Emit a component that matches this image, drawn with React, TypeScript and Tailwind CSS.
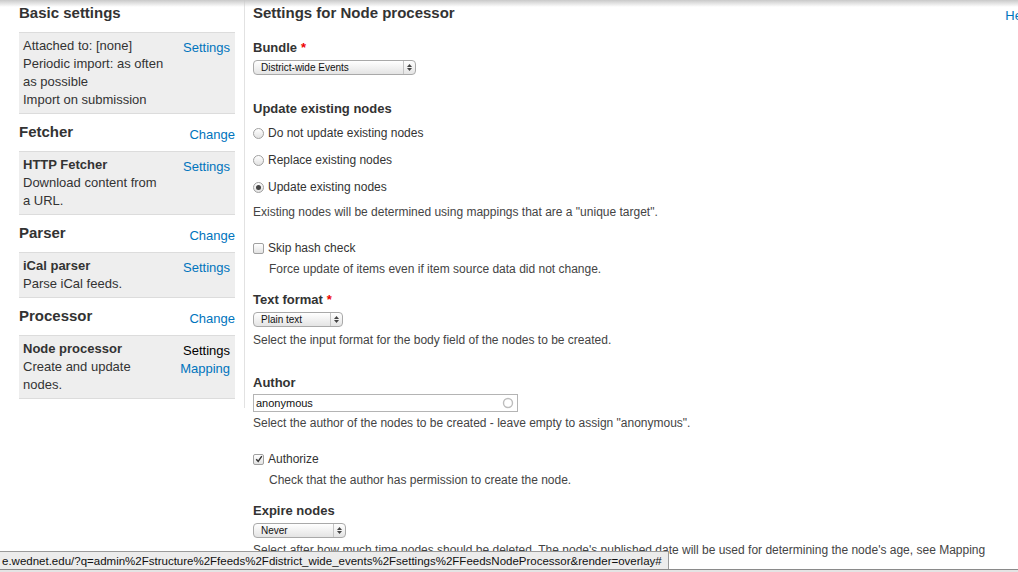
import React from 'react'

const font = { fontFamily: '"Liberation Sans", Arial, sans-serif' }

interface PluginBoxProps {
  title?: string
  lines: string[]
  links: { label: string; active?: boolean }[]
}

const PluginBox: React.FC<PluginBoxProps> = ({ title, lines, links }) => (
  <div className="flex justify-between border-y border-[#dcdcdc] bg-[#eeeeee] pl-[4px] pr-[5px] pt-[4px] pb-[4px] text-[13px] leading-[18px] text-[#333]">
    <div className="w-[142px]">
      {title && <div className="font-bold">{title}</div>}
      {lines.map((l) => (
        <div key={l}>{l}</div>
      ))}
    </div>
    <div className="flex flex-col items-end pt-[2px]">
      {links.map((l) => (
        <span
          key={l.label}
          className={l.active ? 'text-[#000]' : 'text-[#0074bd]'}
        >
          {l.label}
        </span>
      ))}
    </div>
  </div>
)

const SectionHead: React.FC<{ title: string; change?: boolean; first?: boolean }> = ({
  title,
  change,
  first,
}) => (
  <div
    className={`flex items-start justify-between ${
      first ? 'h-[32px] pt-[4px]' : 'h-[37px] pt-[9px]'
    }`}
  >
    <h3 className="text-[15px] font-bold leading-[18px] text-[#333]">{title}</h3>
    {change && (
      <span className="relative top-[3px] text-[13px] leading-[18px] text-[#0074bd]">
        Change
      </span>
    )}
  </div>
)

const Select: React.FC<{ value: string; width: string }> = ({ value, width }) => (
  <div
    className={`flex h-[15px] ${width} items-center justify-between rounded-[4px] border border-[#a9a9a9] bg-gradient-to-b from-[#ffffff] to-[#e4e4e4] text-[10px] leading-[13px] text-[#111]`}
  >
    <span className="pl-[7px]">{value}</span>
    <span className="flex h-full w-[12px] flex-col items-center justify-center gap-[1px] border-l border-[#c4c4c4]">
      <svg width="5" height="3" viewBox="0 0 5 3">
        <path d="M0 3 L2.5 0 L5 3 Z" fill="#444" />
      </svg>
      <svg width="5" height="3" viewBox="0 0 5 3">
        <path d="M0 0 L2.5 3 L5 0 Z" fill="#444" />
      </svg>
    </span>
  </div>
)

const Radio: React.FC<{ label: string; checked?: boolean; className?: string }> = ({
  label,
  checked,
  className,
}) => (
  <div className={`flex items-center text-[12px] leading-[18px] text-[#333] ${className ?? ''}`}>
    <span className="flex h-[11px] w-[11px] items-center justify-center rounded-full border border-[#a0a0a0] bg-gradient-to-b from-[#ffffff] to-[#e2e2e2]">
      {checked && <span className="h-[5px] w-[5px] rounded-full bg-[#444]" />}
    </span>
    <span className="ml-[4px]">{label}</span>
  </div>
)

const Checkbox: React.FC<{ label: string; checked?: boolean; className?: string }> = ({
  label,
  checked,
  className,
}) => (
  <div className={`flex items-center text-[12px] leading-[18px] text-[#333] ${className ?? ''}`}>
    <span className="flex h-[11px] w-[11px] items-center justify-center rounded-[2px] border border-[#a0a0a0] bg-gradient-to-b from-[#ffffff] to-[#e2e2e2]">
      {checked && (
        <svg width="8" height="8" viewBox="0 0 8 8">
          <path d="M1.2 4.2 L3.2 6.3 L6.8 1.2" stroke="#333" strokeWidth="1.4" fill="none" />
        </svg>
      )}
    </span>
    <span className="ml-[4px]">{label}</span>
  </div>
)

const Label: React.FC<{ text: string; required?: boolean; className?: string }> = ({
  text,
  required,
  className,
}) => (
  <div className={`text-[13px] font-bold leading-[18px] text-[#333] ${className ?? ''}`}>
    {text}
    {required && <span className="ml-[4px] text-[#e00]">*</span>}
  </div>
)

const Desc: React.FC<{ children: React.ReactNode; className?: string }> = ({
  children,
  className,
}) => (
  <div className={`text-[12px] leading-[18px] text-[#444] ${className ?? ''}`}>{children}</div>
)

export default function App() {
  return (
    <div className="relative h-[572px] w-[1018px] overflow-hidden bg-white" style={font}>
      {/* top shadow */}
      <div className="pointer-events-none absolute left-0 top-0 z-10 h-[7px] w-full bg-gradient-to-b from-[#c9c9c9] to-transparent" />

      <div className="flex items-start">
        {/* Sidebar */}
        <aside className="w-[245px] shrink-0 border-r border-[#e2e2e2] pb-[9px] pl-[19px] pr-[9px]">
          <SectionHead title="Basic settings" first />
          <PluginBox
            lines={[
              'Attached to: [none]',
              'Periodic import: as often as possible',
              'Import on submission',
            ]}
            links={[{ label: 'Settings' }]}
          />
          <SectionHead title="Fetcher" change />
          <PluginBox
            title="HTTP Fetcher"
            lines={['Download content from a URL.']}
            links={[{ label: 'Settings' }]}
          />
          <SectionHead title="Parser" change />
          <PluginBox
            title="iCal parser"
            lines={['Parse iCal feeds.']}
            links={[{ label: 'Settings' }]}
          />
          <SectionHead title="Processor" change />
          <PluginBox
            title="Node processor"
            lines={['Create and update nodes.']}
            links={[{ label: 'Settings', active: true }, { label: 'Mapping' }]}
          />
        </aside>

        {/* Main form */}
        <main className="min-w-0 flex-1 pl-[8px] pt-[5px]">
          <div className="-mt-[1px] flex h-[18px] items-start">
            <h2 className="text-[15px] font-bold leading-[18px] text-[#333]">
              Settings for Node processor
            </h2>
            <span className="relative top-[3px] ml-auto mr-[-14px] text-[13px] leading-[18px] text-[#0074bd]">
              Help
            </span>
          </div>

          <Label text="Bundle" required className="mt-[17px]" />
          <div className="mt-[3px]">
            <Select value="District-wide Events" width="w-[163px]" />
          </div>

          <Label text="Update existing nodes" className="mt-[25px]" />
          <Radio label="Do not update existing nodes" className="mt-[6px]" />
          <Radio label="Replace existing nodes" className="mt-[9px]" />
          <Radio label="Update existing nodes" checked className="mt-[9px]" />
          <Desc className="mt-[7px]">
            Existing nodes will be determined using mappings that are a "unique target".
          </Desc>

          <Checkbox label="Skip hash check" className="mt-[18px]" />
          <Desc className="mt-[3px] pl-[16px]">
            Force update of items even if item source data did not change.
          </Desc>

          <Label text="Text format" required className="mt-[13px]" />
          <div className="mt-[3px]">
            <Select value="Plain text" width="w-[90px]" />
          </div>
          <Desc className="mt-[4px]">
            Select the input format for the body field of the nodes to be created.
          </Desc>

          <Label text="Author" className="mt-[25px]" />
          <div className="mt-[2px] flex h-[18px] w-[265px] items-center justify-between border border-[#b4b4b4] pl-[2px] pr-[3px] text-[11px] text-[#111]">
            <span>anonymous</span>
            <svg width="12" height="12" viewBox="0 0 12 12">
              <circle cx="6" cy="6" r="4.5" stroke="#bdbdbd" strokeWidth="1.4" fill="none" />
            </svg>
          </div>
          <Desc className="mt-[2px]">
            Select the author of the nodes to be created - leave empty to assign "anonymous".
          </Desc>

          <Checkbox label="Authorize" checked className="mt-[18px]" />
          <Desc className="mt-[3px] pl-[16px]">
            Check that the author has permission to create the node.
          </Desc>

          <Label text="Expire nodes" className="mt-[13px]" />
          <div className="mt-[3px]">
            <Select value="Never" width="w-[93px]" />
          </div>
          <Desc className="mt-[3px] pr-[20px]">
            Select after how much time nodes should be deleted. The node's published date will be
            used for determining the node's age, see Mapping settings.
          </Desc>
        </main>
      </div>

      {/* browser status bar */}
      <div className="absolute bottom-[3px] left-0 z-20 flex h-[18px] items-center border-r border-t border-[#9a9a9a] bg-[#ececec] pl-[2px] pr-[6px] text-[11.5px] leading-[16px] text-[#111]">
        e.wednet.edu/?q=admin%2Fstructure%2Ffeeds%2Fdistrict_wide_events%2Fsettings%2FFeedsNodeProcessor&amp;render=overlay#
      </div>
      <div className="absolute bottom-0 left-0 z-20 h-[3px] w-full border-t border-[#8a8a8a] bg-[#e4e4e4]" />
    </div>
  )
}
